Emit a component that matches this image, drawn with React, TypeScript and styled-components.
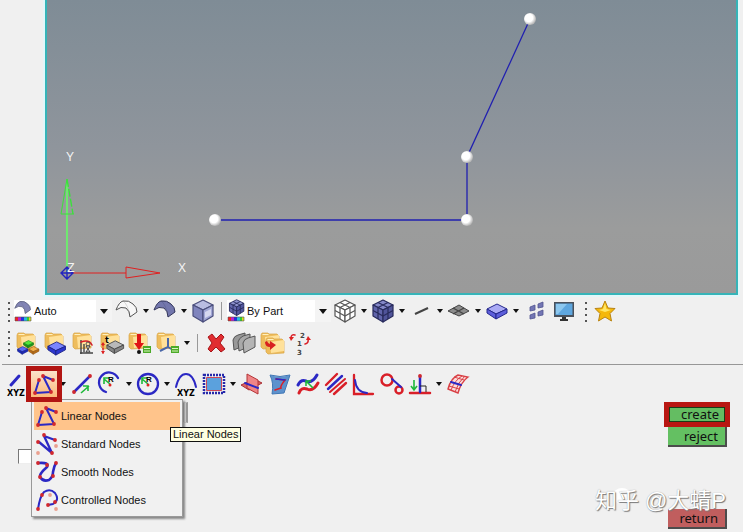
import React from "react";
import styled, { createGlobalStyle } from "styled-components";

const GlobalStyle = createGlobalStyle`
  * { box-sizing: border-box; }
  body { margin: 0; background: #f0f0f0; font-family: "Liberation Sans", Arial, sans-serif; font-size: 11px; color: #111; }
`;

const Page = styled.main`
  position: relative;
  min-height: 100vh;
  display: flex;
  flex-direction: column;
  overflow: hidden;
`;

const Viewport = styled.section`
  margin: 0 5px 0 45px;
  border: 2px solid #35b4b8;
  border-top: 0;
  background: linear-gradient(#7f8c96, #8f959c 50%, #9b9c9c 78%, #9a9a9a);
  box-shadow: 0 0 0 2px #e2f7f9;
`;

const Scene = styled.svg`
  display: block;
  width: 100%;
  height: 293px;
  font-size: 12px;
`;

const Toolbars = styled.div`
  display: flex;
  flex-direction: column;
  gap: 7px;
  padding: 5px 0 7px 7px;
`;

const Bar = styled.div<{ $h: number }>`
  display: flex;
  align-items: center;
  height: ${(p) => p.$h}px;
`;

const CurveBar = styled.div`
  display: flex;
  align-items: center;
  margin-left: 2px;
  padding-top: 5px;
  height: 34px;
  border-top: 1px solid #979797;
`;

const Tool = styled.button<{ $w?: number }>`
  display: flex;
  flex: none;
  align-items: center;
  justify-content: center;
  width: ${(p) => p.$w ?? 28}px;
  height: 28px;
  padding: 0;
  border: 0;
  background: none;
  overflow: visible;
`;

const ActiveTool = styled(Tool)`
  position: relative;
  z-index: 3;
  background: linear-gradient(#fbe3cd, #fdb877);
  &::after {
    content: "";
    position: absolute;
    inset: -4px;
    border: 5px solid #b21512;
  }
`;

const ToolHolder = styled.div`
  position: relative;
  flex: none;
`;

const Glyph = styled.svg`
  display: block;
  flex: none;
  width: 24px;
  height: 24px;
  overflow: visible;
`;

const Grip = styled.span<{ $w: number }>`
  flex: none;
  align-self: stretch;
  width: ${(p) => p.$w}px;
  background: repeating-linear-gradient(transparent 0 2px, #555 2px 4px, transparent 4px 6px) no-repeat;
  background-size: 2px 100%;
  background-position-x: ${(p) => (p.$w > 10 ? 8 : 1)}px;
`;

const Divider = styled.span<{ $w: number }>`
  flex: none;
  width: ${(p) => p.$w}px;
  height: 18px;
  background: linear-gradient(#999, #999) center / 1px 100% no-repeat;
`;

const Combo = styled.label<{ $w: number; $gap: number }>`
  display: flex;
  flex: none;
  align-items: center;
  width: ${(p) => p.$w}px;
  height: 22px;
  margin-right: ${(p) => p.$gap}px;
  background: #fff;
`;

const ComboIcon = styled.span`
  width: 20px;
  height: 24px;
`;

const ComboArrow = styled.span`
  display: flex;
  align-items: center;
  justify-content: center;
  width: 16px;
  height: 22px;
  background: #f4f4f4;
`;

const Select = styled.select`
  flex: 1;
  min-width: 0;
  height: 20px;
  padding: 0;
  border: 0;
  appearance: none;
  background: transparent;
  color: #111;
  font: 12px "Liberation Sans", Arial, sans-serif;
  font-size: 11px;
`;

const Menu = styled.ul`
  position: absolute;
  z-index: 2;
  top: 29px;
  left: 1px;
  width: 152px;
  margin: 0;
  padding: 2px;
  border: 1px solid #999;
  background: #f1f1f1;
  box-shadow: 2px 2px 2px #888;
  list-style: none;
`;

const MenuItem = styled.button<{ $on?: boolean }>`
  display: flex;
  align-items: center;
  gap: 2px;
  width: 100%;
  height: 28px;
  padding: 0 0 0 1px;
  border: 0;
  background: ${(p) => (p.$on ? "#ffc48b" : "transparent")};
  color: #111;
  font-family: inherit;
  font-size: 11px;
  white-space: nowrap;
`;

const Tip = styled.div`
  position: absolute;
  top: 27px;
  left: 138px;
  padding: 0 2px;
  border: 1px solid #111;
  background: #ffffe1;
  font-size: 11px;
  line-height: 13px;
  white-space: nowrap;
`;

const Panel = styled.section`
  flex: 1;
  display: flex;
  justify-content: space-between;
  padding: 4px 13px 3px 18px;
`;

const Fields = styled.div`
  display: flex;
  flex-direction: column;
  gap: 26px;
`;

const Toggle = styled.button`
  width: 148px;
  height: 21px;
  margin-left: 22px;
  border: 1px solid #ccc;
  border-right: 2px solid #999;
  background: #eee;
  box-shadow: inset -2px 0 0 #ddd, inset -4px 0 0 #222;
`;

const Entry = styled.input`
  width: 120px;
  height: 15px;
  border: 1px solid #777;
  border-bottom-color: #eee;
  background: #fff;
`;

const Actions = styled.div`
  display: flex;
  flex-direction: column;
  align-items: flex-end;
  width: 66px;
`;

const Marked = styled.div`
  width: 66px;
  padding: 5px;
  background: #b81712;
`;

const Action = styled.button<{ $tone: string; $framed?: boolean; $bottom?: boolean }>`
  display: block;
  width: ${(p) => (p.$framed ? "100%" : "59px")};
  height: ${(p) => (p.$framed ? 15 : 20)}px;
  margin-right: ${(p) => (p.$framed ? 0 : 3)}px;
  margin-top: ${(p) => (p.$bottom ? "auto" : "0")};
  padding: 0 ${(p) => (p.$framed ? 5 : 7)}px 0 0;
  border: ${(p) => (p.$framed ? "1px solid #173d17" : "0 solid #4c4c4c")};
  border-width: ${(p) => (p.$framed ? "1px" : "0 2px 2px 0")};
  background: ${(p) => p.$tone};
  color: #111;
  font-family: "Noto Sans", sans-serif;
  font-size: 13px;
  line-height: 13px;
  text-align: right;
`;

const Watermark = styled.div`
  position: absolute;
  z-index: 4;
  right: 17px;
  bottom: 20px;
  font: 22px/22px "Liberation Sans", "Noto Sans CJK SC", sans-serif;
  color: #fff;
  text-shadow: 1px 1px 1px #777, 0 0 1px #999;
  white-space: nowrap;
  pointer-events: none;
  &::before {
    content: "";
    position: absolute;
    z-index: -1;
    left: 18px;
    top: -2px;
    width: 18px;
    height: 16px;
    border-radius: 50%;
    background: #fff;
  }
`;

const Arrow = ({ w = 10, label }: { w?: number; label: string }) => (
  <Tool $w={w} aria-label={label}>
    <svg width="6" height="4"><path d="M0 0h6L3 4z" fill="#111" /></svg>
  </Tool>
);

const surface = "M1 11Q4 3 8 2Q14 1 18 5Q22 8 22 13L15 18Q15 12 11 9Q6 7 1 11Z";

const Surface = ({ fill, stroke }: { fill: string; stroke: string }) => (
  <g stroke={stroke} strokeLinejoin="round">
    <path d={surface} fill={fill} />
    <path d="M8 2Q13 5 15 18" fill="none" opacity=".2" />
  </g>
);

const Cube = ({ grid, a, b, c, line }: { grid?: boolean; a: string; b: string; c: string; line: string }) => (
  <g stroke={line} strokeLinejoin="round" strokeWidth="1.2">
    <path d="M12 1L22 6L12 11L2 6Z" fill={a} />
    <path d="M2 6L12 11V23L2 17Z" fill={b} />
    <path d="M22 6L12 11V23L22 17Z" fill={c} />
    {grid && <path d="M7 3.5L17 8.5V20M17 3.5L7 8.5V20M2 11.5L12 17L22 11.5" fill="none" />}
  </g>
);

const Rainbow = () => (
  <g>
    <path d="M1 18h3v4H1z" fill="#e22" /><path d="M4 18h3v4H4z" fill="#b2c" />
    <path d="M7 18h3v4H7z" fill="#23d" /><path d="M10 18h3v4h-3z" fill="#2bd" />
    <path d="M13 18h2v4h-2z" fill="#3c3" /><path d="M15 18h2v4h-2z" fill="#dd2" />
    <path d="M1 18h16v4H1z" fill="none" stroke="#555" strokeWidth=".6" />
  </g>
);

const Slab = ({ x = 0, y = 0, s = 1, top, side, line }: { x?: number; y?: number; s?: number; top: string; side: string; line: string }) => (
  <g transform={`translate(${x} ${y}) scale(${s})`} stroke={line} strokeLinejoin="round">
    <path d="M1 6L11 1L21 6L10 11Z" fill={top} />
    <path d="M1 6L10 11V16L1 10Z" fill={side} />
    <path d="M21 6L10 11V16L21 10Z" fill={side} />
  </g>
);

const Folder = () => (
  <g>
    <path d="M1 4L2 2H8L9 3H17L19 5V17L3 18L1 16Z" fill="#eebd5d" stroke="#d9a545" strokeWidth=".7" />
    <path d="M5 6L19 4V15L6 17Z" fill="#ffe19a" />
    <path d="M2 3H8L9 4H3Z" fill="#fff0bd" />
  </g>
);

const Dots = ({ at, soft }: { at: number[][]; soft?: boolean }) => (
  <>{at.map(([x, y]) => <circle key={`${x}-${y}`} cx={x} cy={y} r="1.9" fill={soft ? "#eaa08f" : "#d2282c"} />)}</>
);

const blue = { fill: "none", stroke: "#2b28c4", strokeWidth: 2, strokeLinecap: "round", strokeLinejoin: "round" } as const;
const red = { fill: "none", stroke: "#d91f28", strokeWidth: 2, strokeLinecap: "round" } as const;
const green = { fill: "none", stroke: "#1fb83a", strokeWidth: 1.6 } as const;

const icons: Record<string, React.ReactNode> = {
  autoMode: <><g transform="translate(0 1) scale(.75)"><Surface fill="#8285b5" stroke="#555a78" /></g><Rainbow /></>,
  partMode: <><g transform="translate(1 0) scale(.72)"><Cube grid a="#8f94d0" b="#6468ae" c="#5257a0" line="#262a5c" /></g><Rainbow /></>,
  wireSurface: <Surface fill="#f7f7f7" stroke="#555" />,
  shadedSurface: <Surface fill="#7377ad" stroke="#34375c" />,
  glassCube: <><Cube a="#b9bde2" b="#7f84bd" c="#a2a7d6" line="#4a4e7c" /><path d="M14 13L20 10V16L14 19Z" fill="#d6d8f0" /></>,
  wireCube: <Cube grid a="#fff" b="#fff" c="#fff" line="#555" />,
  solidCube: <Cube grid a="#8488c8" b="#6165ac" c="#50549a" line="#282b5c" />,
  line: <path d="M6 15L19 9" stroke="#444" strokeWidth="2" />,
  shell: <g stroke="#444"><path d="M1 12L12 6L22 12L12 17Z" fill="#8c8c8c" /><path d="M6 9L17 15M17 9L6 15" strokeWidth="1.4" /></g>,
  solid: <Slab y={4} x={1} top="#aaaaf5" side="#5d5edb" line="#25288c" />,
  split: <g fill="#7376b4" stroke="#50548f" strokeWidth=".8"><path d="M5 8l5-2v5l-5 1zM13 5l5-2v5l-5 1zM5 16l5-2v5l-5 1zM13 13l5-2v5l-5 1z" /></g>,
  monitor: <><path d="M2 3H22V18H2Z" fill="#4a515b" /><path d="M3.500 4.500H20.500V16H3.500Z" fill="#5fa7df" /><path d="M4 5H15L6 15H4Z" fill="#8dc8ef" /><path d="M10 18h4v2h2v2H8v-2h2z" fill="#333" /></>,
  star: <><path d="M12 2L15 9L22 9.500L17 14.500L18.500 22L12 18L5.500 22L7 14.500L2 9.500L9 9Z" fill="#f5b80a" stroke="#b98311" strokeLinejoin="round" /><path d="M12 4L13.500 10L18 11L12 13L6 11L10 10Z" fill="#ffe768" /></>,

  assembly: <><Folder /><Slab x={7} y={9} s={0.5} top="#51e63c" side="#1c9b1c" line="#157015" /><Slab x={1} y={15} s={0.52} top="#5a6cf5" side="#1b28bb" line="#121a80" /><Slab x={12} y={15} s={0.52} top="#f3b04a" side="#b96d13" line="#8a4e10" /></>,
  component: <><Folder /><Slab x={3} y={10} s={0.88} top="#7a85ff" side="#2c36cf" line="#1c2386" /></>,
  loads: <><Folder /><path d="M9 9V23M8 22H21M12 13V21" stroke="#444" fill="none" strokeWidth="1.400" /><path d="M9 11Q17 8 20 14" {...red} strokeWidth="1.600" /><circle cx="16" cy="13" r="2" fill="none" stroke="#555" /><path d="M14 15h4l-4 6h4z" fill="#eee" stroke="#444" /></>,
  property: <><Folder /><text x="5" y="12" fontFamily="DejaVu Sans" fontWeight="bold" fontSize="8">t</text><path d="M3 13V22" {...red} strokeDasharray="2 2" strokeWidth="1.500" /><path d="M1 14l2-3 2 3zM1 20l2 3 2-3z" fill="#d22" /><Slab x={6} y={9} s={0.84} top="#b9b9b9" side="#858585" line="#444" /></>,
  force: <><Folder /><path d="M9 3h4v9h3l-5 7-5-7h3z" fill="#e01515" /><circle cx="11" cy="21" r="2" fill="#111" /><path d="M15 15h8v7h-8z" fill="#4caa28" /><path d="M16 17.500h6M16 20h6" stroke="#d8f5bd" /></>,
  system: <><Folder /><path d="M12 7V16L4 20M12 16L17 19" stroke="#4a67a8" strokeWidth="2" fill="none" /><path d="M15 15h8v7h-8z" fill="#4caa28" /><path d="M16 17.500h6M16 20h6" stroke="#d8f5bd" /></>,
  remove: <path d="M4 6L8 3L12 8L17 3L20 6L16 12L21 18L17 21L12 16L7 21L4 18L8 12Z" fill="#e12d31" stroke="#a71519" strokeLinejoin="round" />,
  layers: <g fill="#999" stroke="#555" strokeLinejoin="round"><path d="M1 9Q2 5 6 4L13 2V14L2 19Z" /><path d="M6 11Q7 7 11 5L18 3V15L7 20Z" fill="#a9a9a9" /><path d="M11 12Q12 8 16 7L23 5V16L12 22Z" fill="#b5b5b5" /></g>,
  moveFolder: <><Folder /><g transform="translate(5 5)"><Folder /></g><path d="M5 11Q5 16 10 16V19L16 14L10 10V13Q8 13 7 10Z" fill="#d82020" /></>,
  renumber: <g fontFamily="DejaVu Sans" fontSize="7" fontWeight="bold" fill="#444"><text x="12" y="7">2</text><text x="9" y="15">1</text><text x="9" y="24">3</text><path d="M7 4Q3 3 3 7M17 13Q21 12 20 8" {...red} strokeWidth="1.500" /><path d="M1 6h5l-3 4zM18 9h5l-3-4z" fill="#d22" /></g>,

  xyzLine: <><path d="M7 13L15 4" {...blue} strokeWidth="3" /><text x="3" y="24" fontFamily="DejaVu Sans" fontSize="8" fontWeight="bold">XYZ</text></>,
  linear: <><path d="M21 8L11 4L19 20L3 21L7 8" {...blue} /><Dots at={[[11, 4], [21, 8], [19, 20], [3, 21], [7, 8]]} /></>,
  standard: <><path d="M20 8L9 4L17 21L4 10" {...blue} strokeWidth="2.300" /><Dots at={[[9, 3], [20, 8], [17, 21], [3, 10]]} /><Dots soft at={[[3, 21], [21, 14]]} /></>,
  smooth: <><path d="M3 3Q15 2 12 7Q4 14 5 17Q8 22 14 20Q18 17 18 12Q19 6 21 3" {...blue} strokeWidth="2.600" /><Dots at={[[3, 3], [21, 3], [12, 5], [5, 17], [18, 16]]} /></>,
  controlled: <><path d="M3 21Q5 8 9 4Q15 0 20 5Q25 12 18 16L13 17" {...blue} /><Dots at={[[3, 21], [7, 7], [13, 17], [20, 14]]} /><Dots soft at={[[15, 7], [21, 21]]} /></>,
  extend: <><path d="M4 20L20 4" {...blue} strokeWidth="2.500" /><Dots at={[[4, 20], [20, 4]]} /><path d="M11 21L19 14M13 14h5v5" {...green} /></>,
  arc: <><path d="M8 20A10 10 0 1 1 20 6" {...blue} strokeWidth="2.300" /><path d="M12 12L6 7M6 12V6H11" {...green} /><text x="10" y="10" fontSize="8" fontWeight="bold">R</text><circle cx="12" cy="13" r="1.500" fill="#d22" /></>,
  circle: <><circle cx="12" cy="12" r="10" {...blue} strokeWidth="2.300" /><path d="M12 12L6 7M6 12V6H11" {...green} /><text x="10" y="10" fontSize="8" fontWeight="bold">R</text><circle cx="12" cy="13" r="1.500" fill="#d22" /></>,
  conic: <><path d="M2 15Q5 2 12 2Q19 2 22 15" {...blue} /><text x="3" y="24" fontFamily="DejaVu Sans" fontSize="8" fontWeight="bold">XYZ</text></>,
  feature: <><path d="M2 3H22V21H2Z" fill="none" stroke="#2528aa" strokeWidth="2.500" strokeDasharray="2 1" /><path d="M4.500 5.500H19.500V18.500H4.500Z" fill="#5ba1dd" stroke="#cc4758" /></>,
  intersect: <><path d="M1 13L14 7L22 11L9 18Z" fill="#dd6464" stroke="#a92f35" /><path d="M7 2L18 8V22L7 16Z" fill="#ef8587" stroke="#b43437" /><path d="M5 11L18 16" {...blue} /></>,
  uv: <><path d="M2 3Q12 6 22 3L16 21L4 22Q6 11 2 3Z" fill="#5d92cd" stroke="#4077b5" /><path d="M8 7L17 8Q12 14 13 16L7 18" {...red} strokeWidth="1.500" /><path d="M8 7L17 8" {...blue} strokeWidth="1.500" /></>,
  midline: <><path d="M2 13Q5 7 10 9Q16 12 21 3" {...blue} strokeWidth="3" /><path d="M3 21Q5 15 11 17Q17 20 22 11" {...red} strokeWidth="3" /><path d="M17 16L10 9M10 14V9H15" {...green} /></>,
  parallel: <><path d="M2 13L13 2M10 22L22 11" {...red} strokeWidth="2.400" /><path d="M4 17L18 4" {...blue} strokeWidth="2.400" /><path d="M6 20L21 7" {...red} /></>,
  fillet: <><path d="M2 3V22H21" {...red} strokeWidth="2.300" /><path d="M3 8Q4 20 15 21" {...blue} /></>,
  tangent: <><circle cx="7" cy="8" r="5.500" {...red} strokeWidth="2.500" /><circle cx="19" cy="18" r="3.500" {...red} strokeWidth="2.500" /><path d="M12 7L21 15" {...blue} /></>,
  normal: <><path d="M2 21H22" {...red} strokeWidth="2.500" /><path d="M12 4V20" {...blue} strokeWidth="2.500" /><path d="M12 14H18V20" fill="none" stroke="#222" /><path d="M6 8V18M3 14l3 4 3-4" {...green} /><Dots at={[[12, 4]]} /></>,
  meshEdge: <><path d="M2 17Q5 6 12 3L22 5Q15 10 12 21Z" fill="#fbdcdc" stroke="#d94045" strokeWidth="1.400" /><path d="M5 18Q9 8 16 4M9 20Q12 10 19 4M8 5L18 8M3 14L13 17" stroke="#d94045" fill="none" /><path d="M5 10L15 13" {...blue} /></>,
};

const Icon = ({ name }: { name: string }) => <Glyph viewBox="0 0 24 24" aria-hidden="true">{icons[name]}</Glyph>;

type ToolEntry = [name: string, label: string, arrow?: boolean];

const Tools = ({ list, w, arrow }: { list: ToolEntry[]; w?: number; arrow?: number }) => (
  <>
    {list.map(([name, label, more]) => (
      <React.Fragment key={name}>
        <Tool $w={w} aria-label={label}><Icon name={name} /></Tool>
        {more && <Arrow w={arrow} label={`${label} options`} />}
      </React.Fragment>
    ))}
  </>
);

const ModeCombo = ({ icon, label, value, w, gap }: { icon: string; label: string; value: string; w: number; gap: number }) => (
  <Combo $w={w} $gap={gap}>
    <ComboIcon><Icon name={icon} /></ComboIcon>
    <Select aria-label={label} defaultValue={value}><option>{value}</option></Select>
    <ComboArrow><svg width="8" height="5"><path d="M0 0h8L4 5z" fill="#111" /></svg></ComboArrow>
  </Combo>
);

const nodes = [[483, 19], [420, 157], [420, 220], [168, 220]];

export default function App() {
  return (
    <>
      <GlobalStyle />
      <Page>
        <Viewport>
          <Scene role="img" aria-label="Model view">
            <defs>
              <radialGradient id="ball" cx="40%" cy="40%" r="60%">
                <stop offset="55%" stopColor="#fff" /><stop offset="100%" stopColor="#b5b5b5" />
              </radialGradient>
            </defs>
            <path d="M483 19L420 157V220H168" fill="none" stroke="#2120b0" strokeWidth="1.300" />
            {nodes.map(([x, y]) => <circle key={`${x}-${y}`} cx={x} cy={y} r="6" fill="url(#ball)" />)}
            <g fill="none">
              <path d="M20 273V181" stroke="#6fe86f" strokeWidth="2" />
              <path d="M20 179L14 214H27" stroke="#3ce03c" />
              <path d="M20 179L26 214" stroke="#3ce03c" strokeWidth="1.400" strokeDasharray="8 2" />
              <path d="M26 273H79M79 267V278L113 273Z" stroke="#e02020" />
              <path d="M14 273L20 267L26 273L20 279ZM14 273H26M20 267V279" stroke="#2222c0" strokeWidth="1.400" />
            </g>
            <g fill="#f4f4f4" textAnchor="middle">
              <text x="23" y="161">Y</text><text x="135" y="272">X</text><text x="24" y="272">Z</text>
            </g>
          </Scene>
        </Viewport>

        <Toolbars>
          <Bar $h={22}>
            <Grip $w={7} />
            <ModeCombo icon="autoMode" label="Geometry color mode" value="Auto" w={98} gap={3} />
            <Tools w={24} arrow={14} list={[["wireSurface", "Wireframe geometry", true], ["shadedSurface", "Shaded geometry", true], ["glassCube", "Transparency"]]} />
            <Divider $w={12} />
            <ModeCombo icon="partMode" label="Element color mode" value="By Part" w={104} gap={2} />
            <Tools w={24} arrow={14} list={[["wireCube", "Wireframe elements", true], ["solidCube", "Shaded elements", true], ["line", "1D elements", true], ["shell", "2D elements", true], ["solid", "3D elements", true]]} />
            <Tools w={27} list={[["split", "Shrink elements"], ["monitor", "Visualization options"]]} />
            <Grip $w={16} />
            <Tool $w={24} aria-label="Favorites"><Icon name="star" /></Tool>
          </Bar>
          <Bar $h={28}>
            <Grip $w={7} />
            <Tools list={[["assembly", "Assemblies"], ["component", "Components"], ["loads", "Load collectors"], ["property", "Properties"], ["force", "Loads"], ["system", "Systems", true]]} />
            <Divider $w={10} />
            <Tools list={[["remove", "Delete"], ["layers", "Card edit"], ["moveFolder", "Organize"], ["renumber", "Renumber"]]} />
          </Bar>
        </Toolbars>

        <CurveBar>
          <Tool aria-label="Lines by coordinates"><Icon name="xyzLine" /></Tool>
          <ToolHolder>
            <ActiveTool aria-label="Lines from nodes" aria-haspopup="menu"><Icon name="linear" /></ActiveTool>
            <Menu>
              <li><MenuItem $on><Icon name="linear" />Linear Nodes</MenuItem></li>
              <li><MenuItem><Icon name="standard" />Standard Nodes</MenuItem></li>
              <li><MenuItem><Icon name="smooth" />Smooth Nodes</MenuItem></li>
              <li><MenuItem><Icon name="controlled" />Controlled Nodes</MenuItem></li>
              <Tip as="li" role="tooltip">Linear Nodes</Tip>
            </Menu>
          </ToolHolder>
          <Arrow label="Lines from nodes options" />
          <Tools list={[["extend", "Drag line"], ["arc", "Arc", true], ["circle", "Circle", true], ["conic", "Conic"], ["feature", "Features", true], ["intersect", "Intersect"], ["uv", "Manifold"], ["midline", "Midline"], ["parallel", "Offset"], ["fillet", "Fillet"], ["tangent", "Tangent"], ["normal", "Normal", true], ["meshEdge", "Line on mesh"]]} />
        </CurveBar>

        <Panel>
          <Fields>
            <Toggle aria-label="Node list" />
            <Entry aria-label="Value" />
          </Fields>
          <Actions>
            <Marked><Action $framed $tone="#64bd62">create</Action></Marked>
            <Action $tone="#64c062">reject</Action>
            <Action $bottom $tone="#c05e5e">return</Action>
          </Actions>
        </Panel>
        <Watermark>知乎 @大蜻P</Watermark>
      </Page>
    </>
  );
}
